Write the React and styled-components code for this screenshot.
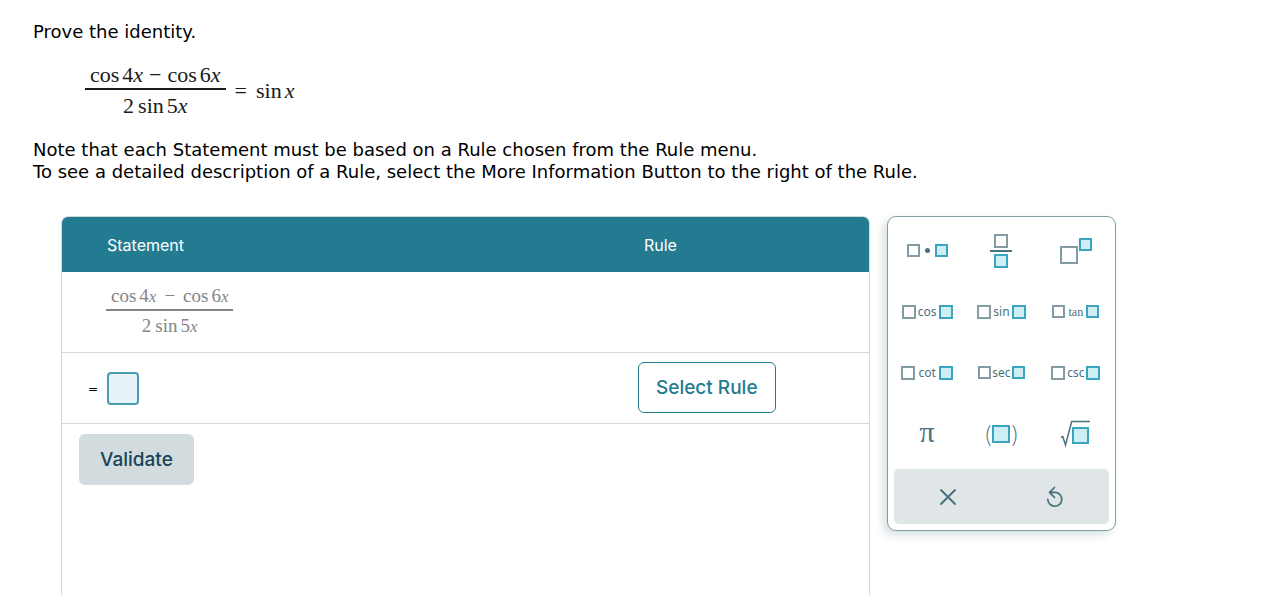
import React from 'react'
import styled, { createGlobalStyle } from 'styled-components'

const GlobalStyle = createGlobalStyle`
    * {
        box-sizing: border-box;
    }

    body {
        margin: 0;
        background: #fff;
        color: #000;
        font-family: "DejaVu Sans", Verdana, sans-serif;
    }

    button, input {
        font: inherit;
        margin: 0;
    }
`

function Fn({ name, arg }) {
  return (
    <Term>
      <span>{name}</span>
      <span>{arg}<Var>x</Var></span>
    </Term>
  )
}

function Identity({ muted }) {
  return (
    <Fraction $muted={muted}>
      <Numerator $muted={muted}>
        <Fn name="cos" arg="4" />
        <span>−</span>
        <Fn name="cos" arg="6" />
      </Numerator>
      <Denominator>
        <span>2</span>
        <Fn name="sin" arg="5" />
      </Denominator>
    </Fraction>
  )
}

function TrigKey({ name, serif, size, gap }) {
  return (
    <Key type="button" aria-label={name}>
      <KeyRow $gap={gap}>
        <Slot $size={size} />
        <KeyText $serif={serif}>{name}</KeyText>
        <Slot $size={size} $filled />
      </KeyRow>
    </Key>
  )
}

function App() {
  return (
    <Page>
      <GlobalStyle />
      <Prompt>Prove the identity.</Prompt>
      <Equation>
        <Identity />
        <span>=</span>
        <Term>
          <span>sin</span>
          <Var>x</Var>
        </Term>
      </Equation>
      <Prompt>
        Note that each Statement must be based on a Rule chosen from the Rule menu.
        <br />
        To see a detailed description of a Rule, select the More Information Button to the right of the Rule.
      </Prompt>

      <Workspace>
        <ProofPanel>
          <ProofTable>
            <thead>
              <tr>
                <HeadCell $wide>Statement</HeadCell>
                <HeadCell>Rule</HeadCell>
              </tr>
            </thead>
            <tbody>
              <tr>
                <GivenCell>
                  <Identity muted />
                </GivenCell>
                <Cell />
              </tr>
              <tr>
                <Cell>
                  <Step>
                    <label htmlFor="step">=</label>
                    <StepInput id="step" type="text" />
                  </Step>
                </Cell>
                <RuleCell>
                  <RuleButton type="button">Select Rule</RuleButton>
                </RuleCell>
              </tr>
            </tbody>
          </ProofTable>
          <ValidateButton type="button">Validate</ValidateButton>
        </ProofPanel>

        <Keypad>
          <Keys>
            <Key type="button" aria-label="Multiply">
              <KeyRow $gap={5}>
                <Slot $size={13} />
                <Dot />
                <Slot $size={13} $filled />
              </KeyRow>
            </Key>
            <Key type="button" aria-label="Fraction">
              <KeyStack>
                <Slot $size={14} />
                <Bar />
                <Slot $size={14} $filled />
              </KeyStack>
            </Key>
            <Key type="button" aria-label="Exponent">
              <Power>
                <Slot $size={18} />
                <Slot $size={13} $filled />
              </Power>
            </Key>

            <TrigKey name="cos" size={14} gap={2} />
            <TrigKey name="sin" size={14} gap={2} />
            <TrigKey name="tan" size={13} gap={3} serif />
            <TrigKey name="cot" size={14} gap={3} />
            <TrigKey name="sec" size={13} gap={1} />
            <TrigKey name="csc" size={14} gap={2} />

            <Key type="button" aria-label="Pi">
              <Pi>π</Pi>
            </Key>
            <Key type="button" aria-label="Parentheses">
              <KeyRow $gap={1}>
                <Paren>(</Paren>
                <Slot $size={18} $filled />
                <Paren>)</Paren>
              </KeyRow>
            </Key>
            <Key type="button" aria-label="Square root">
              <svg width="32" height="28" viewBox="0 0 32 28" fill="none">
                <path d="M1 17.5l1.8-1L5.5 25l6.2-23.5H30" stroke="#4a7280" strokeWidth="1.5" />
                <rect x="13" y="8" width="15" height="15" fill="#cdeef4" stroke="#3ba4be" strokeWidth="2" />
              </svg>
            </Key>
          </Keys>
          <Actions>
            <Action type="button" aria-label="Clear">
              <svg width="18" height="18" viewBox="0 0 18 18" fill="none" stroke="#44707f" strokeWidth="1.8" strokeLinecap="round">
                <path d="M2 2l14 14M16 2L2 16" />
              </svg>
            </Action>
            <Action type="button" aria-label="Undo">
              <svg width="18" height="22" viewBox="0 0 18 22" fill="none" stroke="#44707f" strokeWidth="1.7" strokeLinecap="round" strokeLinejoin="round">
                <path d="M8.5 1.5L3.5 6.3l5 5M3.8 6.3h5.7a7 7 0 1 1-7.7 7" />
              </svg>
            </Action>
          </Actions>
        </Keypad>
      </Workspace>
    </Page>
  )
}

export default App

const Page = styled.main`
    display: flex;
    flex-direction: column;
    min-height: 100vh;
    padding: 21px 0 0 33px;
`

const Prompt = styled.p`
    margin: 0;
    font-size: 18px;
    line-height: 22px;
`

const Equation = styled.div`
    display: flex;
    align-items: center;
    gap: 9px;
    padding: 19px 0 20px 52px;
    font-family: "Liberation Serif", "Times New Roman", serif;
    font-size: 22px;
    color: #1a1a1a;
`

const Fraction = styled.div`
    display: inline-flex;
    flex-direction: column;
    font-family: "Liberation Serif", "Times New Roman", serif;
    font-size: ${props => props.$muted ? 19 : 22}px;
    line-height: ${props => props.$muted ? 24 : 26}px;
    color: ${props => props.$muted ? '#858585' : '#1a1a1a'};

    i {
        font-size: ${props => props.$muted ? 17 : 22}px;
    }
`

const Numerator = styled.div`
    display: flex;
    justify-content: center;
    gap: ${props => props.$muted ? 8 : 6}px;
    padding: 0 5px;
    border-bottom: 2px solid currentColor;
`

const Denominator = styled.div`
    display: flex;
    justify-content: center;
    gap: 4px;
    padding-top: 3px;
`

const Term = styled.span`
    display: inline-flex;
    align-items: baseline;
    gap: 3px;
`

const Var = styled.i`
    font-style: italic;
`

const Workspace = styled.div`
    display: flex;
    flex: 1;
    gap: 17px;
    padding: 33px 165px 0 28px;
`

const ProofPanel = styled.section`
    flex: 1;
    border: 1px solid #d0dadc;
    border-bottom: none;
    border-radius: 7px 7px 0 0;
    overflow: hidden;
`

const ProofTable = styled.table`
    width: 100%;
    table-layout: fixed;
    border-collapse: collapse;
`

const HeadCell = styled.th`
    width: ${props => props.$wide ? '71%' : '29%'};
    height: 55px;
    padding: 0 0 0 ${props => props.$wide ? 45 : 9}px;
    background: #227b90;
    color: #fff;
    font-family: Inter, sans-serif;
    font-size: 16px;
    font-weight: 400;
    text-align: left;
`

const Cell = styled.td`
    padding: 0;
    border-bottom: 1px solid #d0dadc;
`

const GivenCell = styled(Cell)`
    height: 80px;
    padding-left: 44px;
`

const RuleCell = styled(Cell)`
    height: 71px;
    padding-left: 3px;
`

const Step = styled.div`
    display: flex;
    align-items: center;
    gap: 9px;
    padding: 2px 0 0 26px;
    font-size: 12px;
`

const StepInput = styled.input`
    width: 32px;
    height: 33px;
    padding: 0 4px;
    border: 2px solid #4b9cac;
    border-radius: 4px;
    background: #e5f3f9;
`

const RuleButton = styled.button`
    height: 51px;
    padding: 0 17px;
    border: 1px solid #227b90;
    border-radius: 6px;
    background: #fff;
    color: #227b90;
    font-family: Inter, sans-serif;
    font-size: 19px;
    font-weight: 500;
    cursor: pointer;
`

const ValidateButton = styled(RuleButton)`
    margin: 10px 17px;
    padding: 0 21px;
    border: none;
    background: #d2dbdd;
    color: #174557;
`

const Keypad = styled.aside`
    align-self: flex-start;
    width: 229px;
    padding: 3px 0 6px;
    border: 1px solid #809da4;
    border-radius: 9px;
    background: #fff;
    box-shadow: -4px 4px 8px rgba(60, 100, 110, 0.2);
`

const Keys = styled.div`
    display: grid;
    grid-template-columns: repeat(3, 1fr);
    grid-auto-rows: 61px;
    padding: 0 2px;
`

const Key = styled.button`
    display: flex;
    align-items: center;
    justify-content: center;
    padding: 0;
    border: none;
    background: none;
    color: #4a7280;
    cursor: pointer;
`

const KeyRow = styled.span`
    display: flex;
    align-items: center;
    gap: ${props => props.$gap}px;
`

const KeyStack = styled.span`
    display: flex;
    flex-direction: column;
    align-items: center;
    gap: 2px;
`

const Power = styled.span`
    display: flex;
    align-items: flex-end;

    span:last-child {
        margin: 0 0 13px 1px;
    }
`

const Slot = styled.span`
    width: ${props => props.$size}px;
    height: ${props => props.$size}px;
    border: 2px solid ${props => props.$filled ? '#3ba4be' : '#839ba2'};
    background: ${props => props.$filled ? '#cdeef4' : '#fff'};
`

const Dot = styled.span`
    width: 5px;
    height: 5px;
    border-radius: 50%;
    background: #4a7280;
`

const Bar = styled.span`
    width: 22px;
    height: 2px;
    background: #4a7280;
`

const KeyText = styled.span`
    font-family: ${props => props.$serif ? '"Liberation Serif", serif' : '"Noto Sans", sans-serif'};
    font-size: 12px;
    line-height: 14px;
`

const Pi = styled.span`
    font-family: "Liberation Serif", serif;
    font-size: 30px;
    line-height: 36px;
    padding-bottom: 4px;
`

const Paren = styled.span`
    font-family: Lato, sans-serif;
    font-size: 24px;
    font-weight: 300;
    line-height: 26px;
`

const Actions = styled.div`
    display: grid;
    grid-template-columns: 1fr 1fr;
    height: 55px;
    margin: 5px 6px 0;
    border-radius: 5px;
    background: #e0e5e7;
`

const Action = styled(Key)`
    height: 100%;
`
